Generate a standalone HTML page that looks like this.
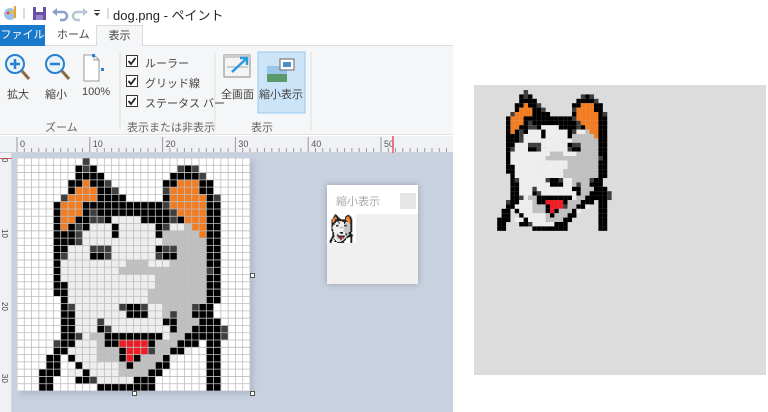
<!DOCTYPE html>
<html><head><meta charset="utf-8"><style>
*{margin:0;padding:0;box-sizing:border-box}
body{width:768px;height:412px;overflow:hidden;background:#fff;position:relative;font-family:"Liberation Sans","Noto Sans CJK JP",sans-serif;color:#333}
.a{position:absolute}
.t{font-size:12px;white-space:nowrap}
.s{font-size:11px;white-space:nowrap;color:#444}
</style></head><body>
<div class="a" style="left:0;top:0;width:453px;height:25px;background:#fff"></div>
<svg class="a" style="left:2px;top:4px" width="110" height="18">
<circle cx="8" cy="10" r="6" fill="#9ec3e6"/><circle cx="6" cy="9" r="1.5" fill="#e44"/><circle cx="10" cy="8" r="1.5" fill="#fb0"/><rect x="12" y="2" width="2" height="12" fill="#e8a030"/>
<line x1="22" y1="4" x2="22" y2="15" stroke="#bbb"/>
<rect x="31" y="3" width="13" height="13" fill="#6b4ea8"/><rect x="34" y="3" width="7" height="5" fill="#fff"/><rect x="34" y="11" width="7" height="5" fill="#9a85c8"/>
<path d="M54 8 h7 a4 4 0 0 1 0 8 h-3" stroke="#8aa0c8" stroke-width="2.5" fill="none"/><path d="M50 8 l5 -4 v8z" fill="#8aa0c8"/>
<path d="M82 8 h-7 a4 4 0 0 0 0 8 h3" stroke="#b8c4d8" stroke-width="2.5" fill="none"/><path d="M86 8 l-5 -4 v8z" fill="#b8c4d8"/>
<path d="M92 9 h6 l-3 3z" fill="#333"/><rect x="92" y="6" width="6" height="1" fill="#333"/>
<line x1="106" y1="4" x2="106" y2="15" stroke="#bbb"/>
</svg>
<div class="a t" style="left:113px;top:5px;font-size:13px;color:#222">dog.png - ペイント</div>
<div class="a" style="left:0;top:25px;width:453px;height:21px;background:#fff;border-bottom:1px solid #dadbdc"></div>
<div class="a t" style="left:0;top:25px;width:45px;height:21px;background:#1979ca;color:#fff;font-size:11px;line-height:21px;text-align:center">ファイル</div>
<div class="a t" style="left:57px;top:25px;font-size:11px;line-height:21px;color:#444">ホーム</div>
<div class="a t" style="left:96px;top:25px;width:47px;height:22px;background:#f5f6f7;border:1px solid #dadbdc;border-bottom:none;font-size:11px;line-height:21px;text-align:center;color:#444">表示</div>
<div class="a" style="left:0;top:46px;width:453px;height:89px;background:#f5f6f7;border-bottom:1px solid #e2e3e4"></div>
<svg class="a" style="left:0;top:50px" width="320" height="85">
<circle cx="15" cy="14" r="9" fill="#e8f3fb" stroke="#2a7fcf" stroke-width="2"/><path d="M15 9v10M10 14h10" stroke="#2a7fcf" stroke-width="2.5"/><path d="M22 21l7 8" stroke="#8a6a40" stroke-width="3"/>
<circle cx="55" cy="14" r="9" fill="#e8f3fb" stroke="#2a7fcf" stroke-width="2"/><path d="M50 14h10" stroke="#2a7fcf" stroke-width="2.5"/><path d="M62 21l7 8" stroke="#8a6a40" stroke-width="3"/>
<path d="M84 5h10l5 5v21h-15z" fill="#fff" stroke="#999"/><path d="M94 5v5h5" fill="none" stroke="#999"/><rect x="92" y="4" width="3" height="3" fill="#2a7fcf"/><rect x="101" y="18" width="3" height="3" fill="#2a7fcf"/>
<line x1="120" y1="2" x2="120" y2="80" stroke="#e0e1e2"/>
<line x1="215" y1="2" x2="215" y2="80" stroke="#e0e1e2"/>
<line x1="311" y1="2" x2="311" y2="80" stroke="#e0e1e2"/>
<rect x="258" y="2" width="47" height="61" fill="#cce4f7" stroke="#99c9ef"/>
<rect x="224" y="5" width="26" height="22" fill="#f4f4f4" stroke="#888"/><rect x="224" y="5" width="26" height="3" fill="#ccc"/><line x1="227" y1="17" x2="248" y2="17" stroke="#aaa"/><path d="M232 22l14-13M240 8h7v7" stroke="#2a9ae0" stroke-width="2.5" fill="none"/>
<rect x="267" y="16" width="20" height="16" fill="#5a9a6a"/><rect x="267" y="16" width="20" height="8" fill="#9cc6e8"/><rect x="280" y="9" width="14" height="11" fill="#fff" stroke="#666"/><rect x="283" y="12" width="8" height="5" fill="#4a90c8"/>
</svg>
<div class="a s" style="left:7px;top:86px">拡大</div>
<div class="a s" style="left:45px;top:86px">縮小</div>
<div class="a s" style="left:82px;top:86px">100%</div>
<div class="a s" style="left:221px;top:86px">全画面</div>
<div class="a s" style="left:259px;top:86px">縮小表示</div>
<div class="a s" style="left:45px;top:119px;color:#666">ズーム</div>
<div class="a s" style="left:127px;top:119px;color:#666">表示または非表示</div>
<div class="a s" style="left:251px;top:119px;color:#666">表示</div>
<svg class="a" style="left:126px;top:55px" width="14" height="54">
<g fill="#fff" stroke="#333"><rect x="0.5" y="0.5" width="11" height="11"/><rect x="0.5" y="20.5" width="11" height="11"/><rect x="0.5" y="40.5" width="11" height="11"/></g>
<g fill="none" stroke="#222" stroke-width="1.8"><path d="M2.5 6l2.5 3 4.5-6"/><path d="M2.5 26l2.5 3 4.5-6"/><path d="M2.5 46l2.5 3 4.5-6"/></g>
</svg>
<div class="a s" style="left:145px;top:55px">ルーラー</div>
<div class="a s" style="left:145px;top:75px">グリッド線</div>
<div class="a s" style="left:145px;top:95px">ステータス バー</div>
<div class="a" style="left:0;top:136px;width:453px;height:17px;background:#f0f1f5"></div>
<svg class="a" style="left:0;top:136px" width="453" height="17" id="ruler"></svg>
<div class="a" style="left:0;top:153px;width:453px;height:259px;background:#c8d1e0"></div>
<div class="a" style="left:0;top:153px;width:12px;height:259px;background:#f0f1f5;border-right:1px solid #d5d8de"></div>
<div class="a" style="left:0;top:158px;width:12px;height:1px;background:#e55"></div>
<div class="a s" style="left:1px;top:158px;font-size:8px;transform:rotate(90deg);transform-origin:4px 4px">0</div>
<div class="a s" style="left:1px;top:229px;font-size:8px;transform:rotate(90deg);transform-origin:4px 4px">10</div>
<div class="a s" style="left:1px;top:302px;font-size:8px;transform:rotate(90deg);transform-origin:4px 4px">20</div>
<div class="a s" style="left:1px;top:374px;font-size:8px;transform:rotate(90deg);transform-origin:4px 4px">30</div>
<div class="a" style="left:20px;top:161px;width:234px;height:234px;background:#b2bccc;filter:blur(2px)"></div>
<svg class="a" style="left:17px;top:158px" width="233" height="233" id="cv"></svg>
<div class="a" style="left:132px;top:391px;width:5px;height:5px;background:#fff;border:1px solid #555"></div>
<div class="a" style="left:250px;top:391px;width:5px;height:5px;background:#fff;border:1px solid #555"></div>
<div class="a" style="left:250px;top:273px;width:5px;height:5px;background:#fff;border:1px solid #555"></div>
<div class="a" style="left:327px;top:185px;width:91px;height:99px;background:#f0f0f0;box-shadow:0 0 6px rgba(0,0,0,.25)"></div>
<div class="a" style="left:327px;top:185px;width:91px;height:29px;background:#fff"></div>
<div class="a s" style="left:336px;top:193px;font-size:11px;color:#aaa">縮小表示</div>
<div class="a" style="left:400px;top:193px;width:16px;height:16px;background:#e5e5e5"></div>
<svg class="a" style="left:327px;top:214px" width="90" height="70"><rect x="0" y="0" width="29" height="29" fill="#fff"/><g id="mini"></g></svg>
<div class="a" style="left:474px;top:85px;width:292px;height:290px;background:#dcdcdc"></div>
<svg class="a" style="left:484px;top:90px" width="141" height="141" id="big"></svg>
<script>
var M=[
".........D......................",
"........KDK...........DKD.......",
"........KKKK.........KKKKD......",
".......KKOKKD.......KKOOOKK.....",
".......KOOOKKD......DOOOOKK.....",
"......DOOOOKKKK.....KOOOOOKD....",
".....KOOOKKKKKKKKKKKDOOOOOKK....",
".....KOOOKDKKKKKKKKKKDOOOOKK....",
".....KOOKKDDKLLLLKKKKDKOOOKK....",
".....KOKDKLLLKLLLLLKDLLGOOKK....",
".....KKKDLLLLKLLLLLKGGGGGOKK....",
".....KKKDLLLLLLLLLLLGGGGGGKK....",
".....KKLLLDDDLLLLLLKDDGGGGKK....",
".....KDLLLKKDLLLLLLDKKGGGGKK....",
".....KLLLLLLLLLGGGLLLGGGGGKK....",
".....KLLLLLLLLGGGGGGGGGGGGDK....",
".....KLLLLLLLLLLLLLGGGGGGGKK....",
".....KKLLLLLLLLLLLLGGGGGGGKK....",
".....KKLLLLLLLLLLLGGGGGGGGKK....",
"......KLLLLLLLLLLLGGGGGGGGKK....",
"......KDLLLLLLDKKDLLGGGGDKK.....",
"......KKLLLLLLLKKKLLGDGGKKK.....",
"......KKLLLDLLLLLLLLKKGGGKKK....",
"......KKLLLKDLLLLLLLLKGGKKKKD...",
"......KKDLGGKKKKKKKKLGGKKKKKD...",
".....DKKLLLGKKRRRRKGGGKKK.KK....",
".....KKLLLLGGGKRRRDGGKKL..KK....",
"....KK.KLLLGGGKRKGGGKL....KK....",
"....KK..KLLLLLGKGGGKK.....KK....",
"...KKK.LLKLLLLGGGGKK......KK....",
"...KK...KKDLLLLLKKK.......KK....",
"...KK......KKKKKKKK.......KK...."];
var C={K:"#000",D:"#3f3f3f",O:"#f27c22",L:"#eeeeee",G:"#c0c0c0",R:"#ee1c24"};
function draw(id,s,grid,bg){var h='';if(bg)h+='<rect width="'+(32*s)+'" height="'+(32*s)+'" fill="'+bg+'"/>';
for(var r=0;r<32;r++)for(var c=0;c<32;c++){var ch=M[r][c];if(C[ch])h+='<rect x="'+(c*s)+'" y="'+(r*s)+'" width="'+(s+0.05)+'" height="'+(s+0.05)+'" fill="'+C[ch]+'"/>';}
if(grid){for(var i=0;i<=32;i++){h+='<line x1="'+(i*s)+'" y1="0" x2="'+(i*s)+'" y2="'+(32*s)+'" stroke="#bdbdbd" stroke-width="0.8"/><line y1="'+(i*s)+'" x1="0" y2="'+(i*s)+'" x2="'+(32*s)+'" stroke="#bdbdbd" stroke-width="0.8"/>';}}
document.getElementById(id).innerHTML=h;}
draw('cv',233/32,true,'#fff');
draw('big',4.4,false,null);
draw('mini',0.9,false,null);
var r='<line x1="0" y1="16.5" x2="453" y2="16.5" stroke="#d0d3da"/>';
for(var u=0;u<=60;u++){var x=17+u*7.28;if(x>452)break;var big=u%10==0;
r+='<line x1="'+x+'" x2="'+x+'" y1="'+(big?1:12)+'" y2="16" stroke="#999"/>';
if(big)r+='<text x="'+(x+3)+'" y="11" font-size="9" fill="#555" font-family="Liberation Sans">'+u+'</text>';}
r+='<line x1="393" x2="393" y1="0" y2="17" stroke="#e55" stroke-width="1.5"/>';
document.getElementById('ruler').innerHTML=r;
</script>
</body></html>
